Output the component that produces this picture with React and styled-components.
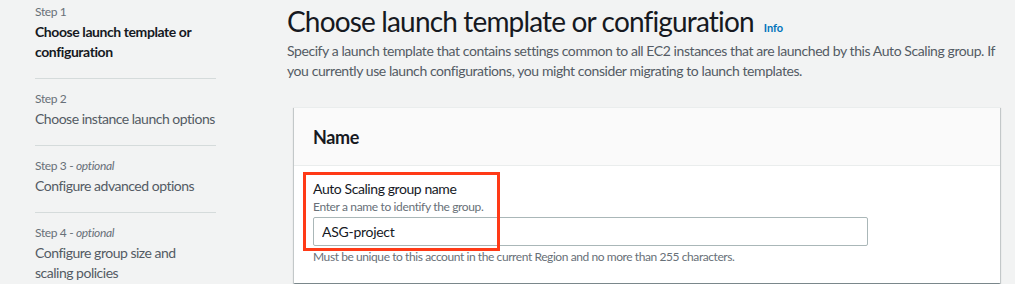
import React from 'react';
import styled, { createGlobalStyle } from 'styled-components';

const GlobalStyle = createGlobalStyle`
    html, body {
        margin: 0;
        padding: 0;
        background: #f2f3f3;
        font-family: Lato, "Liberation Sans", sans-serif;
        color: #16191f;
    }
`

const Page = styled.div`
    display: grid;
    grid-template-columns: 287px 1fr;
    width: 1015px;
    height: 284px;
    overflow: hidden;
`

const Nav = styled.nav`
    padding: 4px 0 0 35px;
    width: 181px;
`

const StepItem = styled.div`
    padding-bottom: ${p => (p.last ? '0' : '16px')};
    margin-bottom: 12px;
    border-bottom: ${p => (p.last ? 'none' : '1px solid #d5dbdb')};
`

const StepLabel = styled.div`
    font-size: 12px;
    line-height: 16px;
    letter-spacing: -0.03em;
    color: #687078;
    em {
        font-style: italic;
    }
`

const StepTitle = styled.div`
    margin-top: 2px;
    font-size: 14px;
    line-height: 20px;
    letter-spacing: ${p => (p.active ? '-0.03em' : '-0.035em')};
    font-weight: ${p => (p.active ? 700 : 400)};
    color: ${p => (p.active ? '#16191f' : '#545b64')};
`

const Main = styled.main`
    padding: 2px 10px 0 0;
`

const Heading = styled.h1`
    margin: 0;
    font-size: 28px;
    line-height: 38px;
    font-weight: 400;
    letter-spacing: -0.03em;
    color: #16191f;
`

const InfoLink = styled.a`
    margin-left: 10px;
    font-size: 11px;
    line-height: 1;
    font-weight: 700;
    letter-spacing: 0;
    color: #0073bb;
    text-decoration: none;
`

const Intro = styled.p`
    margin: 1px 0 0;
    font-size: 14px;
    line-height: 20px;
    letter-spacing: -0.03em;
    color: #545b64;
`

const Card = styled.section`
    margin: 26px 0 0 7px;
    width: 706px;
    background: #ffffff;
    box-shadow: 0 1px 1px 0 rgba(0, 28, 36, 0.3), 1px 1px 1px 0 rgba(0, 28, 36, 0.15), -1px 1px 1px 0 rgba(0, 28, 36, 0.15);
    border-top: 1px solid #eaeded;
`

const CardHeader = styled.header`
    height: 57px;
    display: flex;
    align-items: center;
    padding: 0 19px;
    background: #fafafa;
    border-bottom: 1px solid #eaeded;
    font-size: 18px;
    font-weight: 700;
    letter-spacing: -0.02em;
`

const CardBody = styled.div`
    padding: 13px 19px 18px;
`

const Field = styled.div`
    position: relative;
`

const Label = styled.label`
    display: block;
    font-size: 14px;
    line-height: 20px;
    letter-spacing: -0.03em;
    color: #16191f;
`

const Description = styled.div`
    font-size: 12px;
    line-height: 16px;
    letter-spacing: -0.03em;
    color: #687078;
`

const Input = styled.input`
    display: block;
    box-sizing: border-box;
    margin-top: 2px;
    width: 555px;
    height: 29px;
    padding: 0 8px;
    border: 1px solid #aab7b8;
    border-radius: 2px;
    font-family: inherit;
    font-size: 14px;
    letter-spacing: -0.02em;
    color: #16191f;
    background: #ffffff;
    &:focus {
        outline: none;
    }
`

const Constraint = styled.div`
    margin-top: 3px;
    font-size: 12px;
    line-height: 16px;
    letter-spacing: -0.035em;
    color: #687078;
`

const Highlight = styled.div`
    position: absolute;
    left: -10px;
    top: -7px;
    width: 197px;
    height: 79px;
    box-sizing: border-box;
    border: 3px solid #ff3a17;
    pointer-events: none;
`

const steps = [
    { label: 'Step 1', title: 'Choose launch template or configuration', active: true },
    { label: 'Step 2', title: 'Choose instance launch options' },
    { label: 'Step 3', optional: true, title: 'Configure advanced options' },
    { label: 'Step 4', optional: true, title: 'Configure group size and scaling policies' },
]

function App() {
    return (
        <>
            <GlobalStyle />
            <Page>
                <Nav>
                    {steps.map((s, i) => (
                        <StepItem key={s.label} last={i === steps.length - 1}>
                            <StepLabel>
                                {s.label}
                                {s.optional && <> - <em>optional</em></>}
                            </StepLabel>
                            <StepTitle active={s.active}>{s.title}</StepTitle>
                        </StepItem>
                    ))}
                </Nav>
                <Main>
                    <Heading>
                        Choose launch template or configuration
                        <InfoLink href="#">Info</InfoLink>
                    </Heading>
                    <Intro>
                        Specify a launch template that contains settings common to all EC2 instances that are launched by this Auto Scaling group. If you currently use launch configurations, you might consider migrating to launch templates.
                    </Intro>
                    <Card>
                        <CardHeader>Name</CardHeader>
                        <CardBody>
                            <Field>
                                <Label>Auto Scaling group name</Label>
                                <Description>Enter a name to identify the group.</Description>
                                <Input defaultValue="ASG-project" />
                                <Highlight />
                            </Field>
                            <Constraint>
                                Must be unique to this account in the current Region and no more than 255 characters.
                            </Constraint>
                        </CardBody>
                    </Card>
                </Main>
            </Page>
        </>
    )
}

export default App;
